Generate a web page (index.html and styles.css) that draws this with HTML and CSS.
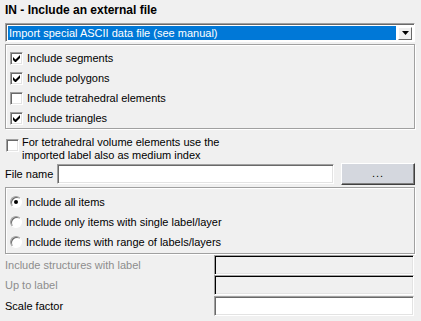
FILE: index.html
```html
<!DOCTYPE html>
<html lang="en">
<head>
  <meta charset="UTF-8">
  <title>IN - Include an external file</title>
  <link rel="stylesheet" href="styles.css">
</head>
<body>
  <div class="panel">
    <div class="title">IN - Include an external file</div>

    <!-- import type -->
    <div class="combo">
      <div class="combo-value">Import special ASCII data file (see manual)</div>
      <div class="combo-btn">
        <svg width="9" height="5" viewBox="0 0 9 5"><path d="M1 0h7L4.5 4z" fill="#000"/></svg>
      </div>
    </div>

    <div class="group items">
      <label class="row"><span class="check on"></span>Include segments</label>
      <label class="row"><span class="check on"></span>Include polygons</label>
      <label class="row"><span class="check"></span>Include tetrahedral elements</label>
      <label class="row"><span class="check on"></span>Include triangles</label>
    </div>

    <label class="medium">
      <span class="check"></span>
      <span>For tetrahedral volume elements use the<br>imported label also as medium index</span>
    </label>

    <div class="file-row">
      <span class="file-label">File name</span>
      <div class="field file-field"></div>
      <div class="browse">...</div>
    </div>

    <div class="group radios">
      <label class="row"><span class="radio on"></span>Include all items</label>
      <label class="row"><span class="radio"></span>Include only items with single label/layer</label>
      <label class="row"><span class="radio"></span>Include items with range of labels/layers</label>
    </div>

    <div class="form-row first disabled">
      <span class="form-label">Include structures with label</span>
      <div class="field off"></div>
    </div>
    <div class="form-row disabled">
      <span class="form-label">Up to label</span>
      <div class="field off"></div>
    </div>
    <div class="form-row last">
      <span class="form-label">Scale factor</span>
      <div class="field"></div>
    </div>
  </div>
</body>
</html>
```

FILE: styles.css
```css
body {
  margin: 0;
  background: #f0f0f0;
  font-family: "Liberation Sans", Arial, sans-serif;
  font-size: 11px;
  color: #000;
}
.panel {
  width: 410px;
  padding: 0 0 0 5px;
}
.title {
  height: 20px;
  line-height: 20px;
  font-weight: bold;
  font-size: 12px;
}

/* combo box */
.combo {
  margin-top: 3px;
  height: 19px;
  box-sizing: border-box;
  border-top: 1px solid #a0a0a0;
  border-left: 1px solid #a0a0a0;
  border-right: 1px solid #fff;
  border-bottom: 1px solid #fff;
  box-shadow: inset 1px 1px 0 #696969;
  background: #fff;
  display: flex;
  padding: 2px 2px 1px 2px;
}
.combo-value {
  flex: 1;
  background: #0078d7;
  color: #fff;
  line-height: 15px;
  padding-left: 1px;
  white-space: nowrap;
  overflow: hidden;
}
.combo-btn {
  width: 14px;
  box-sizing: border-box;
  margin: 1px 0 0 2px;
  background: #f0f0f0;
  border-top: 1px solid #fff;
  border-left: 1px solid #fff;
  border-right: 1px solid #696969;
  border-bottom: 1px solid #696969;
  display: flex;
  align-items: center;
  justify-content: center;
}

/* group boxes */
.group {
  margin-top: 2px;
  border: 1px solid #a0a0a0;
  box-shadow: inset 1px 1px 0 #fff, 1px 1px 0 #fff;
  padding: 3px 0 0 4px;
}
.row {
  height: 20px;
  display: flex;
  align-items: center;
  gap: 4px;
}
.items {
  height: 80px;
}
.radios {
  height: 61px;
  margin-top: 2px;
  padding-top: 4px;
}
.check {
  width: 13px;
  height: 13px;
  box-sizing: border-box;
  border-top: 1px solid #a0a0a0;
  border-left: 1px solid #a0a0a0;
  border-right: 1px solid #fff;
  border-bottom: 1px solid #fff;
  box-shadow: inset 1px 1px 0 #696969, inset -1px -1px 0 #e3e3e3;
  background: #fff;
  flex: none;
  display: inline-flex;
  align-items: center;
  justify-content: center;
}
.check.on::after {
  content: "";
  width: 7px;
  height: 7px;
  background: url("data:image/svg+xml;utf8,<svg xmlns='http://www.w3.org/2000/svg' width='7' height='7'><path d='M0 2v3l2 2h1l4-4V0L2.5 4.5z' fill='black'/></svg>") no-repeat;
}
.radio {
  width: 12px;
  height: 12px;
  border-radius: 50%;
  box-sizing: border-box;
  border: 1px solid #a0a0a0;
  border-bottom-color: #fff;
  border-right-color: #fff;
  box-shadow: inset 1px 1px 0 #696969;
  background: #fff;
  flex: none;
  display: inline-flex;
  align-items: center;
  justify-content: center;
}
.radio.on::after {
  content: "";
  width: 4px;
  height: 4px;
  border-radius: 50%;
  background: #000;
}

/* extra checkbox */
.medium {
  margin-top: 7px;
  display: flex;
  align-items: flex-start;
  gap: 3px;
  line-height: 13px;
  padding-left: 1px;
}
.medium .check {
  margin-top: 3px;
}

/* file name */
.file-row {
  margin-top: 1px;
  display: flex;
  align-items: center;
  height: 22px;
}
.file-label {
  width: 52px;
}
.field {
  height: 20px;
  box-sizing: border-box;
  border-top: 1px solid #a0a0a0;
  border-left: 1px solid #a0a0a0;
  border-right: 1px solid #fff;
  border-bottom: 1px solid #fff;
  box-shadow: inset 1px 1px 0 #696969, inset -1px -1px 0 #e3e3e3;
  background: #fff;
}
.file-field {
  width: 277px;
}
.browse {
  margin-left: 7px;
  width: 74px;
  height: 22px;
  box-sizing: border-box;
  background: #d4d7de;
  border-top: 1px solid #fff;
  border-left: 1px solid #fff;
  border-right: 1px solid #404040;
  border-bottom: 1px solid #404040;
  box-shadow: inset -1px -1px 0 #808080;
  text-align: center;
  line-height: 18px;
  letter-spacing: 1px;
}

/* label/value rows */
.form-row {
  display: flex;
  align-items: center;
  height: 20px;
}
.form-row.first {
  margin-top: 1px;
}
.form-row.last {
  margin-top: 1px;
}
.form-label {
  width: 209px;
}
.form-row .field {
  width: 200px;
}
.disabled .form-label {
  color: #8d8d8d;
}
.field.off {
  background: #f0f0f0;
  box-shadow: inset 1px 1px 0 #000, inset -1px -1px 0 #e3e3e3;
}
```
